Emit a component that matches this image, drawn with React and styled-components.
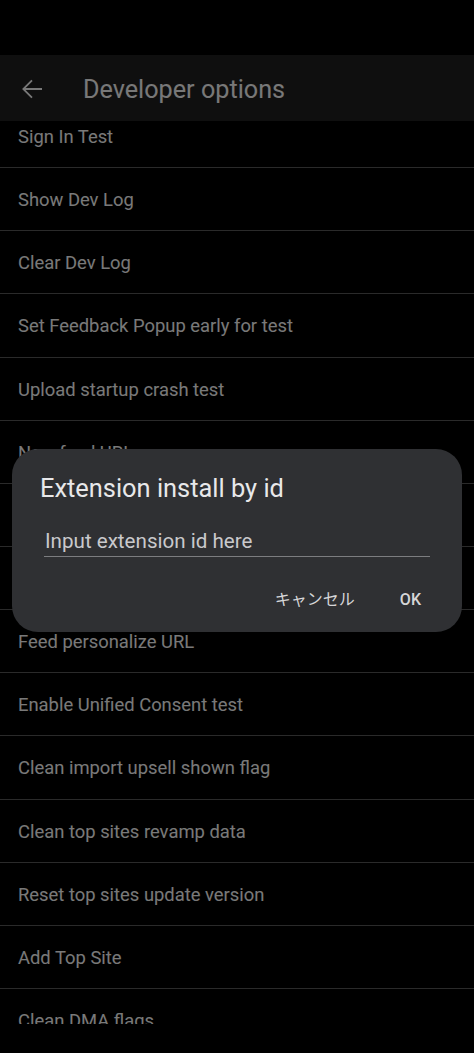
import React from "react";
import styled, { createGlobalStyle } from "styled-components";

const Global = createGlobalStyle`
  html, body { margin: 0; padding: 0; background: #000; }
  body { font-family: Roboto, "Noto Sans", "Noto Sans CJK JP", sans-serif; }
  * { box-sizing: border-box; }
`;

const Screen = styled.div`
  position: relative;
  width: 474px;
  height: 1053px;
  overflow: hidden;
  background: #000;
  display: flex;
  flex-direction: column;
`;

const StatusBar = styled.div`
  height: 55px;
  flex: none;
  background: #000;
`;

const AppBar = styled.header`
  position: relative;
  z-index: 1;
  height: 66px;
  flex: none;
  background: #1e1e1e;
  display: flex;
  align-items: center;
  padding: 2px 0 0 17px;
  gap: 36px;
`;

const BackButton = styled.button`
  width: 30px;
  height: 30px;
  padding: 0;
  border: 0;
  background: none;
  color: #f2f2f2;
  display: flex;
  align-items: center;
  justify-content: center;
`;

const Title = styled.h1`
  margin: 0;
  font-size: 25.2px;
  font-weight: 400;
  color: #f0f0f0;
`;

const Content = styled.main`
  flex: 1;
  overflow: hidden;
`;

const List = styled.ul`
  list-style: none;
  margin: -16px 0 0;
  padding: 0;
`;

const Row = styled.li`
  height: 63.15px;
  border-bottom: 1px solid #555;
  display: flex;
  align-items: center;
  padding: 1px 18px 0;
  font-size: 18.4px;
  color: #f2f2f2;
`;

const NavBar = styled.div`
  height: 29px;
  flex: none;
  background: #000;
`;

const Scrim = styled.div`
  position: absolute;
  inset: 0;
  z-index: 5;
  background: rgba(0, 0, 0, 0.5);
`;

const Dialog = styled.div`
  position: absolute;
  z-index: 6;
  left: 12px;
  top: 449px;
  width: 450px;
  height: 183px;
  border-radius: 26px;
  background: #2f3033;
  display: flex;
  flex-direction: column;
  padding: 24px 0 0;
`;

const DialogTitle = styled.h2`
  margin: 0;
  padding-left: 28px;
  font-size: 25.4px;
  line-height: 30px;
  font-weight: 400;
  color: #e8e8ea;
`;

const Field = styled.div`
  margin: 23px 32px 0;
  height: 31px;
  border-bottom: 1px solid #7c7d80;
  display: flex;
  align-items: center;
  padding-left: 1px;
  font-size: 20.6px;
  color: #c9c9cc;
`;

const Actions = styled.div`
  display: flex;
  justify-content: flex-end;
  align-items: center;
  gap: 45px;
  padding-right: 41px;
  margin-top: 32px;
`;

const ActionButton = styled.button`
  padding: 0;
  border: 0;
  background: none;
  font-family: Roboto, "Noto Sans CJK JP", sans-serif;
  font-size: 16px;
  font-weight: ${(p) => (p.$strong ? 500 : 400)};
  color: #d6d6d8;
  line-height: 22px;
`;

const items = [
  "Sign In Test",
  "Show Dev Log",
  "Clear Dev Log",
  "Set Feedback Popup early for test",
  "Upload startup crash test",
  "New feed URL",
  "Feed service URL",
  "Feed config URL",
  "Feed personalize URL",
  "Enable Unified Consent test",
  "Clean import upsell shown flag",
  "Clean top sites revamp data",
  "Reset top sites update version",
  "Add Top Site",
  "Clean DMA flags",
  "Reset first run",
];

export default function App() {
  return (
    <>
      <Global />
      <Screen>
        <StatusBar />
        <AppBar>
          <BackButton aria-label="Back">
            <svg width="30" height="30" viewBox="0 0 24 24" fill="currentColor">
              <path d="M20 11.25H6.9l5.6-5.6-1.05-1.05L4.05 12l7.4 7.4 1.05-1.05-5.6-5.6H20z" />
            </svg>
          </BackButton>
          <Title>Developer options</Title>
        </AppBar>
        <Content>
          <List>
            {items.map((t) => (
              <Row key={t}>{t}</Row>
            ))}
          </List>
        </Content>
        <NavBar />
        <Scrim />
        <Dialog>
          <DialogTitle>Extension install by id</DialogTitle>
          <Field>Input extension id here</Field>
          <Actions>
            <ActionButton>キャンセル</ActionButton>
            <ActionButton $strong>OK</ActionButton>
          </Actions>
        </Dialog>
      </Screen>
    </>
  );
}
